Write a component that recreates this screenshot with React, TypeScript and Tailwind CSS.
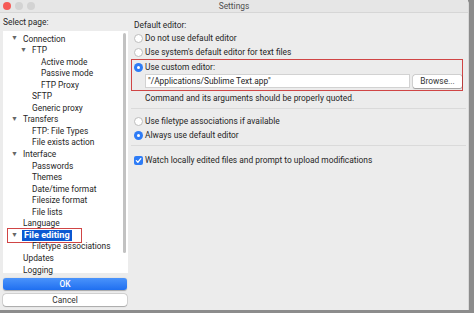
import React from "react";

type Node = { label: string; level: number; arrow?: boolean; selected?: boolean };

const tree: Node[] = [
  { label: "Connection", level: 0, arrow: true },
  { label: "FTP", level: 1, arrow: true },
  { label: "Active mode", level: 2 },
  { label: "Passive mode", level: 2 },
  { label: "FTP Proxy", level: 2 },
  { label: "SFTP", level: 1 },
  { label: "Generic proxy", level: 1 },
  { label: "Transfers", level: 0, arrow: true },
  { label: "FTP: File Types", level: 1 },
  { label: "File exists action", level: 1 },
  { label: "Interface", level: 0, arrow: true },
  { label: "Passwords", level: 1 },
  { label: "Themes", level: 1 },
  { label: "Date/time format", level: 1 },
  { label: "Filesize format", level: 1 },
  { label: "File lists", level: 1 },
  { label: "Language", level: 0 },
  { label: "File editing", level: 0, arrow: true, selected: true },
  { label: "Filetype associations", level: 1 },
  { label: "Updates", level: 0 },
  { label: "Logging", level: 0 },
];

const arrowPos = ["w-[20px] pl-[8px]", "w-[29px] pl-[17px]", "w-[38px] pl-[26px]"];

function Radio({ on }: { on?: boolean }) {
  return on ? (
    <span className="w-[9px] h-[9px] rounded-full bg-[#2e7cf6] flex items-center justify-center shrink-0">
      <span className="w-[3px] h-[3px] rounded-full bg-white" />
    </span>
  ) : (
    <span className="w-[9px] h-[9px] rounded-full bg-white border border-[#bdbdbd] shrink-0" />
  );
}

export default function App() {
  return (
    <div className="w-[474px] h-[313px] bg-[#8c8c8c] overflow-hidden font-['Roboto',sans-serif] text-[8.4px] text-[#262626]">
      <div className="w-[469px] h-[310px] bg-[#ececec] flex flex-col rounded-tr-[4px] border-r border-[#d9d9d9]">
        {/* title bar */}
        <div className="h-[13px] grid grid-cols-[1fr_auto_1fr] items-center bg-[#e6e6e6] border-b border-[#d6d6d6]">
          <div className="flex items-center gap-[4px] pl-[3px]">
            <span className="w-[8px] h-[8px] rounded-full bg-[#f65a55]" />
            <span className="w-[8px] h-[8px] rounded-full bg-[#d3d3d3]" />
            <span className="w-[8px] h-[8px] rounded-full bg-[#d3d3d3]" />
          </div>
          <div className="text-[#4f4f4f] text-[8.4px] leading-none">Settings</div>
          <div />
        </div>
        <div className="flex flex-1 min-h-0">
          {/* left */}
          <div className="w-[128px] pl-[3px] flex flex-col">
            <div className="h-[18px] pt-[3px] leading-[12px]">Select page:</div>
            <div className="h-[242px] bg-white flex">
              <div className="flex-1 pt-[2px]">
                {tree.map((n) => (
                  <div key={n.label} className="h-[11.55px] flex items-center leading-none">
                    {n.arrow ? (
                      <span className={`${arrowPos[n.level]} text-[7px] text-[#666] shrink-0`}>▼</span>
                    ) : (
                      <span className={`${arrowPos[n.level]} shrink-0`} />
                    )}
                    {n.selected ? (
                      <span className="outline outline-[1.5px] outline-[#d04545] -ml-[15px] pl-[14px] pr-[9px] flex items-center h-[13px]">
                        <span className="bg-[#0b58d2] text-white text-[9.2px] font-bold px-[2px] h-[11px] flex items-center">{n.label}</span>
                      </span>
                    ) : (
                      <span className="whitespace-nowrap">{n.label}</span>
                    )}
                  </div>
                ))}
              </div>
              <div className="w-[6px] flex justify-center pt-[2px] pr-[2px]">
                <div className="w-[3px] h-[220px] rounded-full bg-[#c2c2c2]" />
              </div>
            </div>
            <div className="mt-[5px] h-[12px] rounded-[3px] bg-gradient-to-b from-[#4a93fb] to-[#1f6ff0] text-white flex items-center justify-center font-medium shadow-[0_0.5px_1px_rgba(0,0,0,0.3)] mr-[1px]">
              OK
            </div>
            <div className="mt-[4px] h-[12px] rounded-[3px] bg-white text-[#333] flex items-center justify-center shadow-[0_0_0_0.5px_rgba(0,0,0,0.2),0_0.5px_1px_rgba(0,0,0,0.2)] mr-[1px]">
              Cancel
            </div>
          </div>
          {/* right */}
          <div className="flex-1 pl-[3px] pr-[2px] flex flex-col">
            <div className="pl-[3px] pt-[6px] h-[18px] leading-[12px]">Default editor:</div>
            <div className="pl-[3px] h-[14px] flex items-center gap-[2px]">
              <Radio />
              <span>Do not use default editor</span>
            </div>
            <div className="pl-[3px] h-[14px] flex items-center gap-[2px]">
              <Radio />
              <span>Use system's default editor for text files</span>
            </div>
            <div className="mr-[3px] border-[1.5px] border-[#d04545] flex flex-col">
              <div className="pl-[2px] h-[14px] flex items-center gap-[2px]">
                <Radio on />
                <span>Use custom editor:</span>
              </div>
              <div className="pl-[13px] pb-[2px] flex items-center gap-[3px] h-[16px]">
                <div className="flex-1 h-[14px] bg-white border border-[#d2d2d2] flex items-center pl-[2px]">
                  "/Applications/Sublime Text.app"
                </div>
                <div className="w-[49px] h-[13px] bg-white rounded-[2px] flex items-center justify-center text-[#333] shadow-[0_0_0_0.5px_rgba(0,0,0,0.2),0_0.5px_1px_rgba(0,0,0,0.25)]">
                  Browse...
                </div>
              </div>
            </div>
            <div className="pl-[14px] h-[14px] flex items-center">Command and its arguments should be properly quoted.</div>
            <div className="mt-[3px] border-t border-[#dadada]" />
            <div className="mt-[5px] pl-[3px] h-[14px] flex items-center gap-[2px]">
              <Radio />
              <span>Use filetype associations if available</span>
            </div>
            <div className="pl-[3px] h-[14px] flex items-center gap-[2px]">
              <Radio on />
              <span>Always use default editor</span>
            </div>
            <div className="mt-[3px] border-t border-[#dadada]" />
            <div className="mt-[7px] pl-[3px] h-[14px] flex items-center gap-[2px]">
              <span className="w-[9px] h-[9px] rounded-[2px] bg-[#2e7cf6] flex items-center justify-center shrink-0">
                <svg width="7" height="7" viewBox="0 0 8 8">
                  <path d="M1.5 4.2 L3.3 6 L6.6 1.8" stroke="white" strokeWidth="1.4" fill="none" strokeLinecap="round" strokeLinejoin="round" />
                </svg>
              </span>
              <span>Watch locally edited files and prompt to upload modifications</span>
            </div>
          </div>
        </div>
      </div>
    </div>
  );
}
